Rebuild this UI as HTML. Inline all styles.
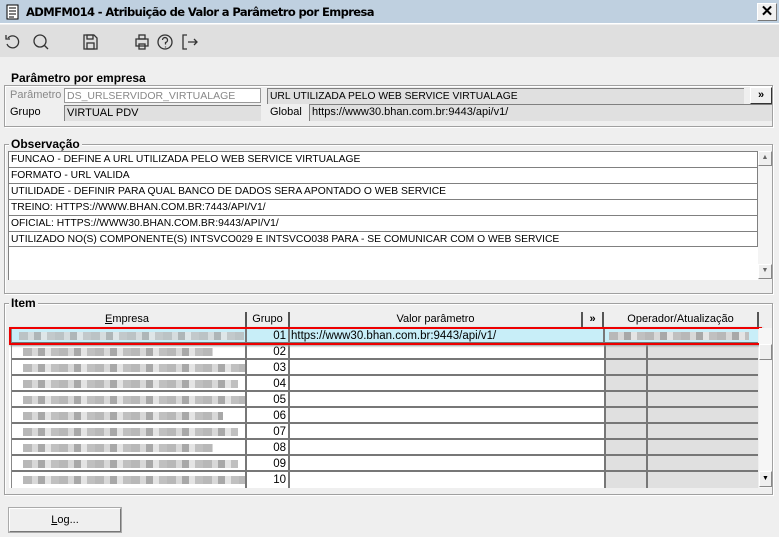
<!DOCTYPE html>
<html><head><meta charset="utf-8"><style>
*{box-sizing:border-box;margin:0;padding:0}
body{width:779px;height:537px;background:#efefef;font-family:"Liberation Sans",Arial,sans-serif;font-size:11px;color:#000;position:relative;overflow:hidden}
.a{position:absolute}
.title{left:0;top:0;width:779px;height:24px;background:#bfd0e0;border-bottom:1px solid #fff}
.tb{left:0;top:25px;width:779px;height:32px;background:#dfdfdf}
.fs{border:1px solid #a0a0a0;box-shadow:1px 1px 0 #fff inset,1px 1px 0 #fff}
.lg{font-weight:bold;font-size:12px;background:#efefef;padding:0 2px;line-height:13px}
.in{background:#e0e0e0;border-top:1px solid #808080;border-left:1px solid #808080;line-height:15px;padding-left:2px;white-space:nowrap;overflow:hidden}
.obs{left:8px;width:750px;height:16px;background:#fff;border:1px solid #808080;border-bottom:none;line-height:15px;padding-left:2px;font-size:10.3px;white-space:nowrap;overflow:hidden}
.hd{top:312px;height:16px;background:#efefef;border-right:2px solid #555;text-align:center;line-height:15px;font-size:11px}
.row{left:9px;height:16px}
.c{position:absolute;top:0;height:16px;border-bottom:2px solid #777;border-right:2px solid #777;line-height:16px;font-size:11.5px}
.blur{position:absolute;top:4px;height:8px;background:repeating-linear-gradient(90deg,#b8b8b8 0 9px,#d8d8d8 9px 15px,#a8a8a8 15px 22px,#e4e4e4 22px 28px,#c0c0c0 28px 36px)}
</style></head><body>
<div class="a title"></div>
<svg class="a" style="left:6px;top:4px" width="14" height="16"><rect x="1" y="1" width="11" height="14" fill="#fff" stroke="#000"/><path d="M3 4h7M3 7h7M3 10h7M3 13h5" stroke="#000"/></svg>
<div class="a" style="left:26px;top:5px;font-weight:bold;font-size:11.5px;font-family:'DejaVu Sans',sans-serif;letter-spacing:-0.6px">ADMFM014 - Atribuição de Valor a Parâmetro por Empresa</div>
<div class="a" style="left:757px;top:3px;width:20px;height:18px;background:#f0f0f0;border:1px solid #fff;border-right-color:#777;border-bottom-color:#777;text-align:center;font-weight:bold;font-size:15px;line-height:16px">✕</div>
<div class="a tb"></div>
<svg class="a" style="left:4px;top:32px" width="200" height="20" fill="none" stroke="#333" stroke-width="1.3">
<path d="M4 6a6 6 0 1 1 -1 6"/><path d="M2 3v4h4"/>
<circle cx="36" cy="9" r="6"/><path d="M40 13l4 4"/>
<path d="M80 3h10l3 3v11h-13z"/><rect x="83" y="3" width="6" height="4"/><rect x="83" y="11" width="7" height="6"/>
<path d="M132 7h12v7h-12z"/><rect x="135" y="3" width="6" height="4"/><rect x="135" y="12" width="6" height="5"/>
<circle cx="161" cy="10" r="7"/><path d="M158.5 8a2.5 2.5 0 1 1 3 2.5v2"/><path d="M161.5 14.5v1"/>
<path d="M183 3h-4v14h4"/><path d="M184 10h9M190 7l3 3-3 3"/>
</svg>

<div class="a fs" style="left:4px;top:85px;width:769px;height:42px"></div>
<div class="a lg" style="left:9px;top:72px">Parâmetro por empresa</div>
<div class="a" style="left:10px;top:89px;color:#888">Parâmetro</div>
<div class="a" style="left:64px;top:88px;width:197px;height:15px;background:#fff;border:1px solid #999;color:#888;line-height:14px;padding-left:2px;font-size:10.5px">DS_URLSERVIDOR_VIRTUALAGE</div>
<div class="a in" style="left:267px;top:88px;width:477px;height:16px;font-size:10.3px">URL UTILIZADA PELO WEB SERVICE VIRTUALAGE</div>
<div class="a" style="left:750px;top:87px;width:22px;height:17px;background:#f0f0f0;border:1px solid #fff;border-right:1px solid #333;border-bottom:1px solid #333;text-align:center;font-weight:bold;line-height:14px">»</div>
<div class="a" style="left:10px;top:106px">Grupo</div>
<div class="a in" style="left:64px;top:105px;width:197px;height:16px">VIRTUAL PDV</div>
<div class="a" style="left:270px;top:106px">Global</div>
<div class="a in" style="left:309px;top:104px;width:463px;height:17px">https://www30.bhan.com.br:9443/api/v1/</div>

<div class="a fs" style="left:4px;top:144px;width:769px;height:150px"></div>
<div class="a lg" style="left:9px;top:138px">Observação</div>
<div class="a" style="left:8px;top:151px;width:750px;height:129px;background:#fff;border-left:1px solid #808080"></div>
<div class="a obs" style="top:151px">FUNCAO - DEFINE A URL UTILIZADA PELO WEB SERVICE VIRTUALAGE</div>
<div class="a obs" style="top:167px">FORMATO - URL VALIDA</div>
<div class="a obs" style="top:183px">UTILIDADE - DEFINIR PARA QUAL BANCO DE DADOS SERA APONTADO O WEB SERVICE</div>
<div class="a obs" style="top:199px">TREINO: HTTPS://WWW.BHAN.COM.BR:7443/API/V1/</div>
<div class="a obs" style="top:215px">OFICIAL: HTTPS://WWW30.BHAN.COM.BR:9443/API/V1/</div>
<div class="a obs" style="top:231px;border-bottom:1px solid #808080">UTILIZADO NO(S) COMPONENTE(S) INTSVCO029 E INTSVCO038 PARA  - SE COMUNICAR COM O WEB SERVICE</div>
<div class="a" style="left:758px;top:151px;width:14px;height:129px;background:#f4f4f4"></div>
<div class="a" style="left:758px;top:151px;width:14px;height:15px;background:#efefef;border:1px solid #fff;border-right-color:#888;border-bottom-color:#888;font-size:7px;text-align:center;line-height:12px;color:#666">▲</div>
<div class="a" style="left:758px;top:264px;width:14px;height:15px;background:#efefef;border:1px solid #fff;border-right-color:#888;border-bottom-color:#888;font-size:7px;text-align:center;line-height:12px;color:#666">▼</div>

<div class="a fs" style="left:4px;top:303px;width:769px;height:192px"></div>
<div class="a lg" style="left:9px;top:297px">Item</div>
<div class="a" style="left:9px;top:328px;width:749px;height:160px;background:#fff"></div>
<div class="a hd" style="left:9px;width:238px"><u>E</u>mpresa</div>
<div class="a hd" style="left:247px;width:43px">Grupo</div>
<div class="a hd" style="left:290px;width:293px">Valor parâmetro</div>
<div class="a hd" style="left:583px;width:21px;font-weight:bold">»</div>
<div class="a hd" style="left:604px;width:155px">Operador/Atualização</div>

<div class="a row" style="top:328px"><div class="c" style="left:0;width:238px;background:#c8eef8"><div class="blur" style="left:10px;width:225px;opacity:.8"></div></div><div class="c" style="left:238px;width:43px;background:#c8eef8;text-align:right;padding-right:2px">01</div><div class="c" style="left:281px;width:315px;background:#c8eef8;padding-left:1px">https://www30.bhan.com.br:9443/api/v1/</div><div class="c" style="left:596px;width:153px;background:#c8eef8;border-right:none"><div class="blur" style="left:4px;width:140px"></div></div></div>
<div class="a row" style="top:344px"><div class="c" style="left:0;width:238px"><div class="blur" style="left:14px;width:190px"></div></div><div class="c" style="left:238px;width:43px;text-align:right;padding-right:2px">02</div><div class="c" style="left:281px;width:316px"></div><div class="c" style="left:597px;width:42px;background:#e0e0e0"></div><div class="c" style="left:639px;width:110px;background:#e0e0e0;border-right:none"></div></div>
<div class="a row" style="top:360px"><div class="c" style="left:0;width:238px"><div class="blur" style="left:14px;width:222px"></div></div><div class="c" style="left:238px;width:43px;text-align:right;padding-right:2px">03</div><div class="c" style="left:281px;width:316px"></div><div class="c" style="left:597px;width:42px;background:#e0e0e0"></div><div class="c" style="left:639px;width:110px;background:#e0e0e0;border-right:none"></div></div>
<div class="a row" style="top:376px"><div class="c" style="left:0;width:238px"><div class="blur" style="left:14px;width:215px"></div></div><div class="c" style="left:238px;width:43px;text-align:right;padding-right:2px">04</div><div class="c" style="left:281px;width:316px"></div><div class="c" style="left:597px;width:42px;background:#e0e0e0"></div><div class="c" style="left:639px;width:110px;background:#e0e0e0;border-right:none"></div></div>
<div class="a row" style="top:392px"><div class="c" style="left:0;width:238px"><div class="blur" style="left:14px;width:222px"></div></div><div class="c" style="left:238px;width:43px;text-align:right;padding-right:2px">05</div><div class="c" style="left:281px;width:316px"></div><div class="c" style="left:597px;width:42px;background:#e0e0e0"></div><div class="c" style="left:639px;width:110px;background:#e0e0e0;border-right:none"></div></div>
<div class="a row" style="top:408px"><div class="c" style="left:0;width:238px"><div class="blur" style="left:14px;width:200px"></div></div><div class="c" style="left:238px;width:43px;text-align:right;padding-right:2px">06</div><div class="c" style="left:281px;width:316px"></div><div class="c" style="left:597px;width:42px;background:#e0e0e0"></div><div class="c" style="left:639px;width:110px;background:#e0e0e0;border-right:none"></div></div>
<div class="a row" style="top:424px"><div class="c" style="left:0;width:238px"><div class="blur" style="left:14px;width:215px"></div></div><div class="c" style="left:238px;width:43px;text-align:right;padding-right:2px">07</div><div class="c" style="left:281px;width:316px"></div><div class="c" style="left:597px;width:42px;background:#e0e0e0"></div><div class="c" style="left:639px;width:110px;background:#e0e0e0;border-right:none"></div></div>
<div class="a row" style="top:440px"><div class="c" style="left:0;width:238px"><div class="blur" style="left:14px;width:190px"></div></div><div class="c" style="left:238px;width:43px;text-align:right;padding-right:2px">08</div><div class="c" style="left:281px;width:316px"></div><div class="c" style="left:597px;width:42px;background:#e0e0e0"></div><div class="c" style="left:639px;width:110px;background:#e0e0e0;border-right:none"></div></div>
<div class="a row" style="top:456px"><div class="c" style="left:0;width:238px"><div class="blur" style="left:14px;width:215px"></div></div><div class="c" style="left:238px;width:43px;text-align:right;padding-right:2px">09</div><div class="c" style="left:281px;width:316px"></div><div class="c" style="left:597px;width:42px;background:#e0e0e0"></div><div class="c" style="left:639px;width:110px;background:#e0e0e0;border-right:none"></div></div>
<div class="a row" style="top:472px"><div class="c" style="left:0;width:238px;border-bottom:none"><div class="blur" style="left:14px;width:222px"></div></div><div class="c" style="left:238px;width:43px;text-align:right;padding-right:2px;border-bottom:none">10</div><div class="c" style="left:281px;width:316px;border-bottom:none"></div><div class="c" style="left:597px;width:42px;background:#e0e0e0;border-bottom:none"></div><div class="c" style="left:639px;width:110px;background:#e0e0e0;border:none"></div></div>
<div class="a" style="left:9px;top:328px;width:3px;height:160px;background:#fff;border-right:1px solid #888"></div>
<div class="a" style="left:9px;top:327px;width:753px;height:18px;border:2px solid #e00;box-shadow:1px 1px 2px #999"></div>
<div class="a" style="left:759px;top:328px;width:13px;height:160px;background:#f6f6f6"></div>
<div class="a" style="left:759px;top:344px;width:13px;height:16px;background:#efefef;border:1px solid #fff;border-right-color:#888;border-bottom-color:#888"></div>
<div class="a" style="left:759px;top:471px;width:13px;height:16px;background:#efefef;border:1px solid #fff;border-right-color:#888;border-bottom-color:#888;font-size:7px;text-align:center;line-height:14px">▼</div>

<div class="a" style="left:9px;top:508px;width:112px;height:24px;background:#efefef;border:1px solid #fff;border-right-color:#777;border-bottom-color:#777;box-shadow:0 0 0 1px #aaa;text-align:center;line-height:22px"><u>L</u>og...</div>
</body></html>
